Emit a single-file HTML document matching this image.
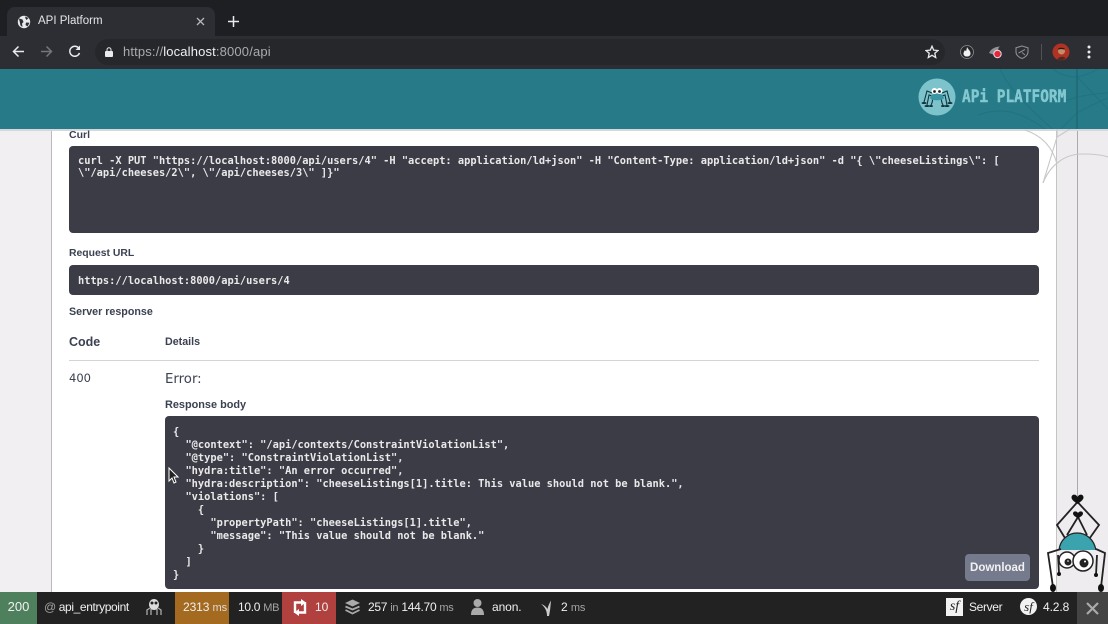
<!DOCTYPE html>
<html><head><meta charset="utf-8"><style>
html,body{margin:0;padding:0;width:1108px;height:624px;overflow:hidden;background:#fff}
body{position:relative;font-family:"Liberation Sans",sans-serif;filter:blur(.3px)}
.a{position:absolute;white-space:pre}
.b{position:absolute}
.m{font-family:"DejaVu Sans Mono","Liberation Mono",monospace;font-weight:700;font-size:10.35px;color:#e9e9ea}
.h{font-family:"Liberation Sans",sans-serif;font-weight:700;font-size:10.7px;color:#3b4151;line-height:14px}
.t{font-size:12px;line-height:14px;color:#f0f0f0;letter-spacing:-.1px}
.g{color:#a5a5a5}
</style></head><body>

<!-- page -->
<div class="b" style="left:0;top:129px;width:51px;height:463px;background:#f1eff1"></div>
<div class="b" style="left:51px;top:129px;width:1px;height:463px;background:#bbb"></div>
<div class="b" style="left:1056px;top:129px;width:1px;height:463px;background:#c4c4c4"></div>
<div class="b" style="left:1057px;top:129px;width:51px;height:463px;background:#eeecee"></div>
<div class="b" style="left:1077px;top:129px;width:1px;height:368px;background:#aaa"></div>

<!-- header -->
<div class="b" style="left:0;top:69px;width:1108px;height:60px;background:#277a87"></div>
<div class="b" style="left:0;top:129px;width:1108px;height:2px;background:#d5d8da"></div>

<!-- web -->
<svg class="b" style="left:960px;top:69px" width="148" height="60" viewBox="0 0 148 60" fill="none">
<g stroke="#227381" stroke-width="1">
<path d="M18 46C40 38 65 40 97 71"/><path d="M40 0C50 22 75 45 97 64"/><path d="M97 64L117 44"/><path d="M93 0C100 6 110 8 117 8C125 6 132 4 137 0"/><path d="M82 30C95 34 108 32 117 28C128 26 138 24 148 24"/><path d="M117 44C128 38 138 33 148 29"/><path d="M117 8L148 40"/>
</g>
<path d="M117 0V60" stroke="#1c6773" stroke-width="1.200"/></svg>
<svg class="b" style="left:960px;top:129px" width="148" height="70" viewBox="0 60 148 70" fill="none">
<g stroke="#c8c8c8" stroke-width="1.100">
<path d="M65 61C80 66 92 76 97 95"/><path d="M97 60V68L83 114"/><path d="M83 114C90 96 105 85 122 85C132 85 142 86 148 88"/><path d="M97 68L110 60"/>
</g></svg>

<!-- logo -->
<svg class="b" style="left:918px;top:78px" width="38" height="38" viewBox="0 0 38 38">
<circle cx="19" cy="19" r="18.500" fill="#7dc3cc"/>
<g fill="none" stroke="#12343c" stroke-width="1.100">
<path d="M14 15L9 13L6 24M24 15L29 13L32 24M14 18L11 17L9 27M24 18L27 17L29 27M15 20L14 25L13 27M23 20L24 25L25 27"/></g>
<g fill="#12343c"><ellipse cx="6" cy="25" rx="2.500" ry="1"/><ellipse cx="32" cy="25" rx="2.500" ry="1"/><ellipse cx="9" cy="28" rx="2.500" ry="1"/><ellipse cx="29" cy="28" rx="2.500" ry="1"/><ellipse cx="13" cy="28" rx="2" ry="1"/><ellipse cx="25" cy="28" rx="2" ry="1"/></g>
<path d="M12 20C13 14 25 14 26 20C25 23 13 23 12 20Z" fill="#3a95a3"/>
<circle cx="16.500" cy="13" r="3" fill="#fff"/><circle cx="21.500" cy="13" r="3" fill="#fff"/><circle cx="16.500" cy="13.500" r="1.400" fill="#222"/><circle cx="21.500" cy="13.500" r="1.400" fill="#222"/>
</svg>
<div class="a" style="left:962px;top:87px;font-family:'DejaVu Sans Mono',monospace;font-weight:700;font-size:16.500px;line-height:19px;color:#83c8d1;-webkit-text-stroke:.4px #83c8d1;transform-origin:0 0;transform:scaleX(.875)">APi PLATFORM</div>

<!-- browser chrome -->
<div class="b" style="left:0;top:0;width:1108px;height:37px;background:#1e1f23"></div>
<div class="b" style="left:0;top:36px;width:1108px;height:33px;background:#2c2e33"></div>
<div class="b" style="left:7px;top:7px;width:208px;height:30px;background:#2c2e33;border-radius:8px 8px 0 0"></div>
<div class="b" style="left:95px;top:39px;width:850px;height:26px;border-radius:13px;background:#26272b"></div>

<svg class="b" style="left:17px;top:15px" width="14" height="14" viewBox="0 0 14 14"><circle cx="7" cy="7" r="6.200" fill="#e8eaed"/><path d="M2 3.500L5.500 4.500L6.500 7L5 8.500L5.500 12L3.500 10.500ZM8 1.500L11.500 3L9.500 5L8.500 3.500ZM9 7.500L12.500 7.800L10.500 11.500L8.500 10Z" fill="#2c2e33"/></svg>
<div class="a" style="left:38px;top:14px;font-size:11.500px;line-height:14px;color:#e3e5e8">API Platform</div>
<svg class="b" style="left:196px;top:17px" width="9" height="9" viewBox="0 0 9 9"><path d="M1 1L8 8M8 1L1 8" stroke="#b5b7ba" stroke-width="1.300"/></svg>
<svg class="b" style="left:228px;top:16px" width="11" height="11" viewBox="0 0 11 11"><path d="M5.500 0V11M0 5.500H11" stroke="#e8eaed" stroke-width="1.500"/></svg>

<svg class="b" style="left:12px;top:45px" width="13" height="13" viewBox="0 0 13 13" fill="none"><path d="M12 6.500H1.500M6.500 1.500L1.500 6.500L6.500 11.500" stroke="#e8eaed" stroke-width="1.500"/></svg>
<svg class="b" style="left:40px;top:45px" width="13" height="13" viewBox="0 0 13 13" fill="none"><path d="M1 6.500H11.500M6.500 1.500L11.500 6.500L6.500 11.500" stroke="#73767a" stroke-width="1.500"/></svg>
<svg class="b" style="left:68px;top:45px" width="13" height="13" viewBox="0 0 13 13" fill="none"><path d="M11 3.500A5 5 0 1 0 11.500 8" stroke="#e8eaed" stroke-width="1.500"/><path d="M12 0.500V5H7.500Z" fill="#e8eaed"/></svg>
<svg class="b" style="left:105px;top:47px" width="8" height="10" viewBox="0 0 8 10"><rect x="0" y="4" width="8" height="6" rx="1" fill="#e8eaed"/><path d="M2 4V2.800A2 2 0 0 1 6 2.800V4" fill="none" stroke="#e8eaed" stroke-width="1"/></svg>
<div class="a" style="left:123px;top:44px;font-size:13px;line-height:16px;color:#a8abaf;letter-spacing:.15px">https://<span style="color:#f0f1f3">localhost</span>:8000/api</div>

<svg class="b" style="left:925px;top:45px" width="14" height="14" viewBox="0 0 14 14"><path d="M7 1.200L8.700 5.100L13 5.500L9.800 8.300L10.700 12.500L7 10.300L3.300 12.500L4.200 8.300L1 5.500L5.300 5.100Z" fill="none" stroke="#e8eaed" stroke-width="1.300"/></svg>
<svg class="b" style="left:960px;top:45px" width="14" height="14" viewBox="0 0 14 14"><circle cx="7" cy="7" r="6.500" fill="#26282b" stroke="#8b8d90" stroke-width=".8"/><path d="M7 2C8 4.500 10.500 5.500 10.500 8.500C10.500 10.500 9 11.500 7 11.500C5 11.500 3.500 10.500 3.500 8.500C3.500 7 4.500 6 5 5C5.500 5.800 5.800 6 6 6.200C6.500 5 6.800 3.500 7 2Z" fill="#f2f2f2"/></svg>
<svg class="b" style="left:988px;top:45px" width="15" height="14" viewBox="0 0 15 14"><path d="M1 8C3 4 6 2 12 1.500C10 3 10.500 4 10 6L6 10C4 9 2.500 8.500 1 8Z" fill="#8f9194"/><circle cx="9.500" cy="9" r="4.200" fill="#e5e5e5"/><circle cx="9.500" cy="9" r="3.200" fill="#e8263c"/></svg>
<svg class="b" style="left:1015px;top:45px" width="14" height="14" viewBox="0 0 14 14" fill="none"><path d="M7 1L13 2.800V7C13 10 10 12.500 7 13.500C4 12.500 1 10 1 7V2.800Z" stroke="#8b8d90" stroke-width="1.100"/><path d="M3.500 8L10 4.500M7 7.500L10 10" stroke="#8b8d90" stroke-width="1"/></svg>
<div class="b" style="left:1041px;top:44px;width:1px;height:16px;background:#505256"></div>
<svg class="b" style="left:1052px;top:43px" width="18" height="18" viewBox="0 0 18 18"><circle cx="9" cy="9" r="8.500" fill="#b03224"/><circle cx="9.500" cy="8" r="3.500" fill="#c98a66"/><path d="M6 6.500C6 4 12.500 4 13 6.500L12 6.500C10 6 8 6 7 6.500Z" fill="#2a1a15"/><path d="M5.500 17C6 13 13 13 13.500 15.500L10 17.500Z" fill="#4c2a22"/></svg>
<svg class="b" style="left:1087px;top:45px" width="4" height="14" viewBox="0 0 4 14"><circle cx="2" cy="2" r="1.500" fill="#e8eaed"/><circle cx="2" cy="7" r="1.500" fill="#e8eaed"/><circle cx="2" cy="12" r="1.500" fill="#e8eaed"/></svg>

<!-- content -->
<div class="a h" style="left:69px;top:128px;font-size:10.500px">Curl</div>
<div class="b" style="left:69px;top:146px;width:970px;height:87px;background:#3c3c46;border-radius:4px"></div>
<div class="a m" style="left:78px;top:156px;line-height:11.500px">curl -X PUT "https://localhost:8000/api/users/4" -H "accept: application/ld+json" -H "Content-Type: application/ld+json" -d "{ \"cheeseListings\": [
\"/api/cheeses/2\", \"/api/cheeses/3\" ]}"</div>

<div class="a h" style="left:69px;top:247px;font-size:10.400px">Request URL</div>
<div class="b" style="left:69px;top:265px;width:970px;height:30px;background:#3c3c46;border-radius:4px"></div>
<div class="a m" style="left:78px;top:275px;line-height:12px">https://localhost:8000/api/users/4</div>

<div class="a h" style="left:69px;top:305px">Server response</div>
<div class="a h" style="left:69px;top:335px;font-size:12.500px">Code</div>
<div class="a h" style="left:165px;top:335px">Details</div>
<div class="b" style="left:69px;top:360px;width:970px;height:1px;background:#d3d4d8"></div>
<div class="a" style="left:69px;top:371px;font-family:'DejaVu Sans',sans-serif;font-size:11.500px;line-height:14px;color:#3b4151">400</div>
<div class="a" style="left:165px;top:372px;font-family:'DejaVu Sans',sans-serif;font-size:13.300px;line-height:16px;color:#3b4151">Error:</div>
<div class="a h" style="left:165px;top:398px;font-size:10.900px">Response body</div>
<div class="b" style="left:165px;top:416px;width:874px;height:173px;background:#3c3c46;border-radius:4px"></div>
<div class="a m" style="left:173px;top:426px;line-height:13px">{
  "@context": "/api/contexts/ConstraintViolationList",
  "@type": "ConstraintViolationList",
  "hydra:title": "An error occurred",
  "hydra:description": "cheeseListings[1].title: This value should not be blank.",
  "violations": [
    {
      "propertyPath": "cheeseListings[1].title",
      "message": "This value should not be blank."
    }
  ]
}</div>
<div class="b" style="left:965px;top:554px;width:65px;height:27px;border-radius:4px;background:#757a8c"></div>
<div class="a" style="left:965px;top:561px;width:65px;text-align:center;font-family:'Liberation Sans',sans-serif;font-weight:700;font-size:11.500px;line-height:14px;color:#f2f2f2">Download</div>

<!-- cursor -->
<svg class="b" style="left:167px;top:467px" width="12" height="18" viewBox="0 0 12 18"><path d="M2 1V14L5 11L7 16L9 15L7 10H11Z" fill="#222" stroke="#fff" stroke-width="1"/></svg>

<!-- spider -->
<svg class="b" style="left:1040px;top:490px" width="68" height="102" viewBox="0 0 68 102" fill="none">
<path d="M37.500 12L17 35L28 53M37.500 12L59 35L47 52M38 27L27 45M38 27L47 45" stroke="#222" stroke-width="1.800"/>
<path d="M37.500 7C36 3.500 31.500 4 31.500 7.500C31.500 10 35 12 37.500 14C40 12 43.500 10 43.500 7.500C43.500 4 39 3.500 37.500 7Z" fill="#111"/>
<path d="M38 23C36.500 20.500 33 21 33 23.500C33 25.500 36 27 38 28.500C40 27 43 25.500 43 23.500C43 21 39.500 20.500 38 23Z" fill="#111"/>
<path d="M19 60C20 50 28 43 37 43C47 43 54 50 56 60C44 60 30 60 19 60Z" fill="#3aa3ae"/>
<path d="M19 60C20 50 28 43 37 43C47 43 54 50 56 60" stroke="#222" stroke-width="1.200"/>
<path d="M21 59L8 63L13 97M18 65L19 83M56 59L65 63L61 97M57 65L56 85" stroke="#222" stroke-width="1.800"/>
<ellipse cx="13" cy="98" rx="3" ry="4" fill="#111"/><ellipse cx="61" cy="98" rx="3" ry="4" fill="#111"/><circle cx="19" cy="84" r="2" fill="#111"/><circle cx="56" cy="85" r="2" fill="#111"/>
<circle cx="27" cy="70" r="8" fill="#fff" stroke="#222" stroke-width="1.500"/><circle cx="43" cy="71" r="10" fill="#fff" stroke="#222" stroke-width="1.500"/>
<circle cx="28" cy="72" r="3.500" fill="#222"/><circle cx="44" cy="73" r="4.500" fill="#222"/><circle cx="28" cy="71" r=".8" fill="#fff"/><circle cx="45" cy="71.500" r="1" fill="#fff"/>
</svg>

<!-- symfony toolbar -->
<div class="b" style="left:0;top:592px;width:1108px;height:32px;background:#222"></div>
<div class="b" style="left:0;top:592px;width:37px;height:32px;background:#4f805d"></div>
<div class="a t" style="left:0;top:600px;width:37px;text-align:center;font-size:13px;letter-spacing:0">200</div>
<div class="a t" style="left:44px;top:600px;letter-spacing:-.38px"><span class="g">@</span> api_entrypoint</div>
<svg class="b" style="left:145px;top:598px" width="18" height="20" viewBox="0 0 18 20" fill="none"><path d="M5 10L2 12V17M13 10L16 12V17M6 11V17M12 11V17" stroke="#aaa" stroke-width="1.300"/><ellipse cx="9" cy="6.500" rx="5" ry="5.500" fill="#ddd"/><circle cx="7" cy="5" r="1.500" fill="#222"/><circle cx="11" cy="5" r="1.500" fill="#222"/></svg>
<div class="b" style="left:175px;top:592px;width:54px;height:32px;background:#a46a1f"></div>
<div class="a t" style="left:183px;top:600px">2313 <span style="font-size:11px;color:#ddd">ms</span></div>
<div class="a t" style="left:238px;top:600px;letter-spacing:-.3px">10.0 <span class="g" style="font-size:11px">MB</span></div>
<div class="b" style="left:282px;top:592px;width:54px;height:32px;background:#b0413e"></div>
<svg class="b" style="left:292px;top:599px" width="16" height="17" viewBox="0 0 16 17" fill="none"><path d="M3 14V3.500H9.500M13 3V13.500H6.500" stroke="#fff" stroke-width="2.400"/><path d="M9 0L14 3.500L9 7ZM7 10L2 13.500L7 17Z" fill="#fff"/></svg>
<div class="a t" style="left:315px;top:600px">10</div>
<svg class="b" style="left:344px;top:599px" width="17" height="16" viewBox="0 0 17 16"><path d="M8.500 0.500L16 4L8.500 7.500L1 4Z" fill="#aaa"/><path d="M1.500 7.500L8.500 10.500L15.500 7.500M1.500 11L8.500 14.500L15.500 11" fill="none" stroke="#aaa" stroke-width="1.800"/></svg>
<div class="a t" style="left:368px;top:600px;letter-spacing:-.28px">257 <span class="g" style="font-size:11px">in</span> 144.70 <span class="g" style="font-size:11px">ms</span></div>
<svg class="b" style="left:470px;top:598px" width="15" height="17" viewBox="0 0 15 17"><circle cx="7.500" cy="5" r="4" fill="#aaa"/><path d="M1 17C1 11 4 9.500 7.500 9.500C11 9.500 14 11 14 17Z" fill="#aaa"/></svg>
<div class="a t" style="left:492px;top:600px">anon.</div>
<svg class="b" style="left:540px;top:600px" width="14" height="16" viewBox="0 0 14 16"><path d="M7 16C7 11 5 7 1 4C4 5 6 6.500 7.500 9C8 6 9.500 3 11 0.500C10.500 5 10.500 9 9 16Z" fill="#ccc"/></svg>
<div class="a t" style="left:561px;top:600px">2 <span class="g" style="font-size:11px">ms</span></div>
<div class="b" style="left:946px;top:598px;width:17px;height:18px;background:#f2f2f2"></div>
<div class="a" style="left:946px;top:598px;width:17px;height:18px;line-height:18px;text-align:center;font-family:'Liberation Serif',serif;font-style:italic;font-size:14px;color:#222">sf</div>
<div class="a t" style="left:969px;top:600px;letter-spacing:-.35px">Server</div>
<div class="b" style="left:1020px;top:598px;width:17px;height:17px;border-radius:50%;background:#f2f2f2"></div>
<div class="a" style="left:1020px;top:598px;width:17px;height:17px;line-height:17px;text-align:center;font-family:'Liberation Serif',serif;font-style:italic;font-size:13px;color:#222">sf</div>
<div class="a t" style="left:1043px;top:600px">4.2.8</div>
<div class="b" style="left:1077px;top:592px;width:31px;height:32px;background:#444"></div>
<svg class="b" style="left:1086px;top:602px" width="13" height="13" viewBox="0 0 13 13"><path d="M1 1L12 12M12 1L1 12" stroke="#aaa" stroke-width="2.200"/></svg>
</body></html>
